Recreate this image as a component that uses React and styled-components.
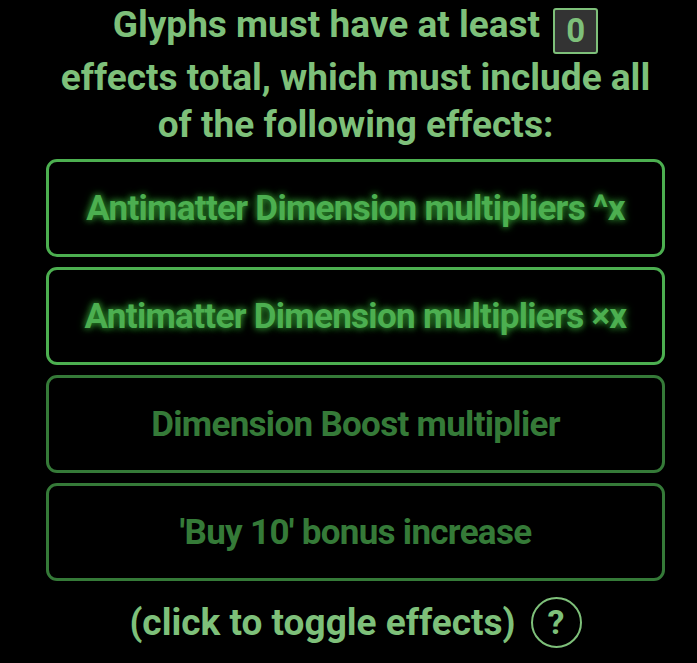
import React, { useState } from 'react';
import styled, { createGlobalStyle } from 'styled-components';

const GlobalStyle = createGlobalStyle`
  html, body {
    margin: 0;
    padding: 0;
    background: #000;
  }
  body {
    font-family: Roboto, "Liberation Sans", sans-serif;
  }
`;

const Page = styled.div`
  width: 697px;
  height: 663px;
  background: #000;
  display: flex;
  flex-direction: column;
  align-items: center;
  box-sizing: border-box;
  padding: 1px 0 0 14px;
`;

const Heading = styled.div`
  width: 625px;
  text-align: center;
  color: #7ec07a;
  font-size: 37px;
  font-weight: 700;
  line-height: 47px;
`;

const CountBox = styled.span`
  display: inline-flex;
  align-items: center;
  justify-content: center;
  width: 45px;
  height: 46px;
  margin-left: 4px;
  vertical-align: -5px;
  box-sizing: border-box;
  background: #333;
  border: 2.5px solid #7ec07a;
  border-radius: 3px;
  color: #7ec07a;
  font-size: 33px;
`;

const List = styled.div`
  display: flex;
  flex-direction: column;
  gap: 10px;
  margin-top: 11px;
  width: 619px;
`;

const EffectButton = styled.button`
  height: 98px;
  box-sizing: border-box;
  background: #000;
  border: 3px solid ${p => (p.$on ? '#4caf50' : '#357a38')};
  border-radius: 11px;
  font-family: Roboto, "Liberation Sans", sans-serif;
  font-size: 35px;
  font-weight: 700;
  letter-spacing: -0.7px;
  padding-top: 3px;
  color: ${p => (p.$on ? '#4caf50' : '#357a38')};
  text-shadow: ${p => (p.$on ? '0 0 6px #2e8b2e, 0 0 10px #1f6b1f' : 'none')};
  cursor: pointer;
`;

const Footer = styled.div`
  display: flex;
  align-items: center;
  justify-content: center;
  gap: 15px;
  margin-top: 16px;
  color: #7ec07a;
  font-size: 37px;
  font-weight: 700;
`;

const HelpIcon = styled.span`
  display: inline-flex;
  align-items: center;
  justify-content: center;
  width: 51px;
  height: 51px;
  box-sizing: border-box;
  border: 2.5px solid #7ec07a;
  border-radius: 50%;
  font-size: 34px;
  font-weight: 700;
`;

const effects = [
  { label: 'Antimatter Dimension multipliers ^x', on: true },
  { label: 'Antimatter Dimension multipliers ×x', on: true },
  { label: 'Dimension Boost multiplier', on: false },
  { label: "'Buy 10' bonus increase", on: false },
];

const App = () => {
  const [list, setList] = useState(effects);

  const toggle = i =>
    setList(l => l.map((e, j) => (j === i ? { ...e, on: !e.on } : e)));

  return (
    <Page>
      <GlobalStyle />
      <Heading>
        Glyphs must have at least <CountBox>0</CountBox>
        <br />
        effects total, which must include all of the following effects:
      </Heading>
      <List>
        {list.map((e, i) => (
          <EffectButton key={e.label} $on={e.on} onClick={() => toggle(i)}>
            {e.label}
          </EffectButton>
        ))}
      </List>
      <Footer>
        (click to toggle effects)
        <HelpIcon>?</HelpIcon>
      </Footer>
    </Page>
  );
};

export default App;
